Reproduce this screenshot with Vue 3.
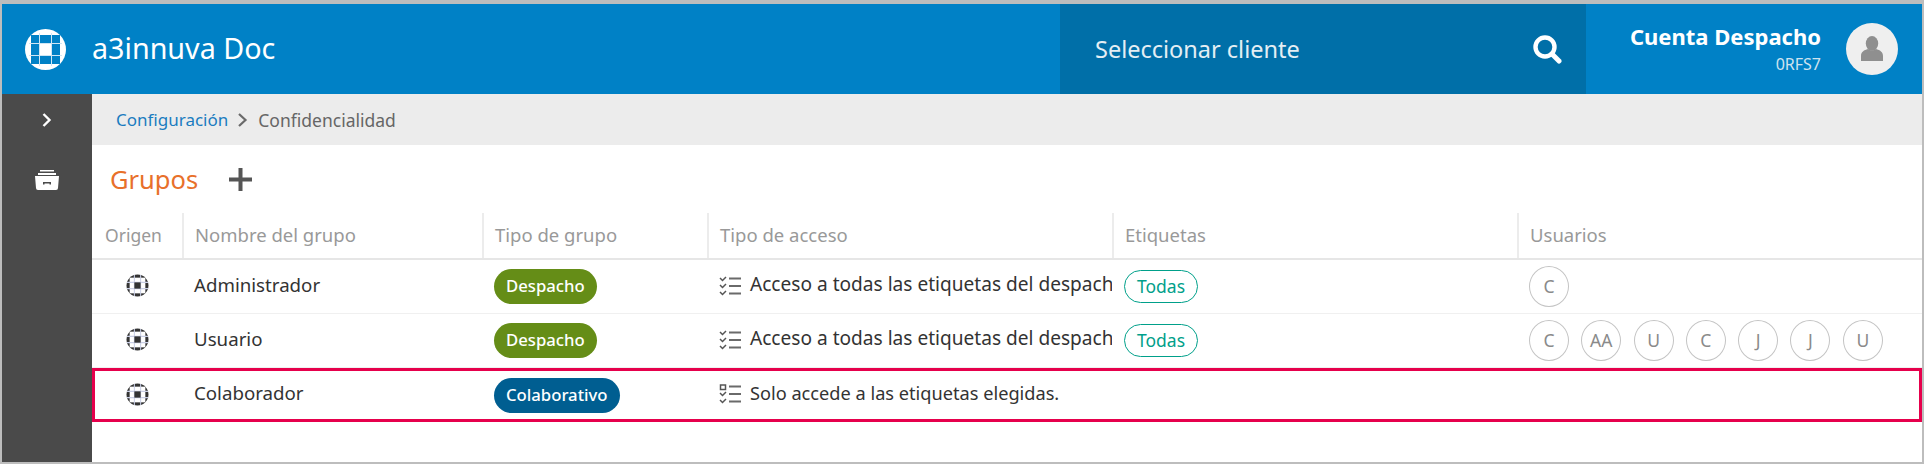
<script setup>
const columns = ["Origen", "Nombre del grupo", "Tipo de grupo", "Tipo de acceso", "Etiquetas", "Usuarios"];

const groups = [
  { name: "Administrador", type: "Despacho", kind: "green", access: "Acceso a todas las etiquetas del despacho", tag: "Todas", users: ["C"], partial: false },
  { name: "Usuario", type: "Despacho", kind: "green", access: "Acceso a todas las etiquetas del despacho", tag: "Todas", users: ["C", "AA", "U", "C", "J", "J", "U"], partial: false },
  { name: "Colaborador", type: "Colaborativo", kind: "blue", access: "Solo accede a las etiquetas elegidas.", tag: "", users: [], partial: true },
];
</script>

<template>
  <div class="frame">
    <header class="topbar">
      <div class="brand">
        <svg class="logo" viewBox="0 0 41 41">
          <circle cx="20.5" cy="20.5" r="20.5" fill="#fff" />
          <path d="M14.500 4v33M26.500 4v33M4 14.500h33M4 26.500h33" stroke="#cfe6f4" stroke-width="1" />
          <g fill="#0081c6">
            <rect x="6" y="6" width="8" height="8" />
            <rect x="15" y="6" width="11" height="8" />
            <rect x="27" y="6" width="8" height="8" />
            <rect x="6" y="15" width="8" height="11" />
            <rect x="27" y="15" width="8" height="11" />
            <rect x="6" y="27" width="8" height="8" />
            <rect x="15" y="27" width="11" height="8" />
            <rect x="27" y="27" width="8" height="8" />
          </g>
        </svg>
        <span class="title">a3innuva Doc</span>
      </div>
      <div class="search">
        <span>Seleccionar cliente</span>
        <svg class="search-icon" viewBox="0 0 30 30">
          <circle cx="13" cy="13" r="9.5" fill="none" stroke="#fff" stroke-width="4.4" />
          <path d="M20 20l7 7" stroke="#fff" stroke-width="5" stroke-linecap="round" />
        </svg>
      </div>
      <div class="account">
        <div class="account-text">
          <strong>Cuenta Despacho</strong>
          <small>0RFS7</small>
        </div>
        <div class="account-avatar">
          <svg viewBox="0 0 52 52">
            <ellipse cx="26" cy="20.5" rx="6.2" ry="7.5" fill="#8f8f8f" />
            <path d="M15 38v-5c0-4 3-6 7-7l4 2 4-2c4 1 7 3 7 7v5z" fill="#8f8f8f" />
          </svg>
        </div>
      </div>
    </header>

    <div class="body">
      <aside class="sidebar">
        <svg class="chevron" viewBox="0 0 12 16">
          <path d="M2.5 2l6 6-6 6" fill="none" stroke="#fff" stroke-width="2.4" />
        </svg>
        <svg class="archive" viewBox="0 0 26 20">
          <path d="M6 0h14v1.500H6zM4 3h18v2H4z" fill="#fff" />
          <path d="M1 6h24l-1 12a2 2 0 0 1-2 2H4a2 2 0 0 1-2-2z" fill="#fff" />
          <path d="M9 12h8v2.500h-1.500V13.500h-5v1H9z" fill="#4a4a4a" />
        </svg>
      </aside>

      <main class="content">
        <nav class="breadcrumb">
          <a>Configuración</a>
          <svg viewBox="0 0 12 16"><path d="M2 2l6.500 6-6.500 6" fill="none" stroke="#6a6a6a" stroke-width="2.200" /></svg>
          <span>Confidencialidad</span>
        </nav>

        <div class="heading">
          <h1>Grupos</h1>
          <svg class="plus" viewBox="0 0 23 23">
            <path d="M11.500 0v23M0 11.500h23" stroke="#555" stroke-width="4" />
          </svg>
        </div>

        <div class="row head">
          <div v-for="col in columns" :key="col" class="th">{{ col }}</div>
        </div>

        <div v-for="group in groups" :key="group.name" class="row" :class="{ selected: group.partial }">
          <div class="cell origin">
            <svg viewBox="0 0 22 22">
              <defs>
                <clipPath id="disc"><circle cx="11" cy="11" r="10.500" /></clipPath>
              </defs>
              <g clip-path="url(#disc)">
                <rect width="22" height="22" fill="#333" />
                <rect x="3.500" y="3.500" width="15" height="15" fill="#fff" />
                <path d="M8 0v22M14 0v22M0 8h22M0 14h22" stroke="#c9cfe6" stroke-width="1" />
                <rect x="8" y="8" width="6" height="6" fill="#333" />
              </g>
            </svg>
          </div>
          <div class="cell name">{{ group.name }}</div>
          <div class="cell">
            <span class="pill" :class="group.kind">{{ group.type }}</span>
          </div>
          <div class="cell access">
            <svg class="list-icon" viewBox="0 0 22 20">
              <rect v-if="group.partial" x="1.500" y="1" width="5" height="4.500" fill="none" stroke="#555" stroke-width="1.500" />
              <path v-else d="M1 2l2.500 2.500L7 1" fill="none" stroke="#555" stroke-width="1.500" />
              <path d="M1 9l2.500 2.500L7 8M1 16l2.500 2.500L7 15" fill="none" stroke="#555" stroke-width="1.500" />
              <path d="M10 2.500h12M10 10h12M10 17.500h12" stroke="#6a6a6a" stroke-width="2" />
            </svg>
            <span class="access-text">{{ group.access }}</span>
          </div>
          <div class="cell tag-cell">
            <span v-if="group.tag" class="tag">{{ group.tag }}</span>
          </div>
          <div class="cell users">
            <span v-for="(user, i) in group.users" :key="i" class="user">{{ user }}</span>
          </div>
        </div>
      </main>
    </div>
  </div>
</template>

<style scoped>
.frame {
  box-sizing: border-box;
  width: 1924px;
  height: 464px;
  border: 2px solid #bdbdbd;
  border-top-width: 4px;
  background: #fff;
  display: flex;
  flex-direction: column;
  overflow: hidden;
  font-family: "Noto Sans", sans-serif;
  color: #333;
}
.topbar {
  height: 90px;
  flex: none;
  background: #0081c6;
  display: flex;
  color: #fff;
}
.brand {
  width: 1058px;
  display: flex;
  align-items: center;
  padding-left: 23px;
  box-sizing: border-box;
}
.logo {
  width: 41px;
  height: 41px;
}
.title {
  margin-left: 26px;
  font-size: 28.7px;
  line-height: 36px;
  padding-bottom: 2px;
}
.search {
  width: 526px;
  background: #006fa8;
  display: flex;
  align-items: center;
  justify-content: space-between;
  box-sizing: border-box;
  padding: 0 24px 0 35px;
  font-size: 23.5px;
  color: #e4eef4;
}
.search-icon {
  width: 30px;
  height: 30px;
}
.account {
  flex: 1;
  display: flex;
  align-items: center;
  justify-content: flex-end;
  padding-right: 24px;
}
.account-text {
  display: flex;
  flex-direction: column;
  align-items: flex-end;
  margin-right: 25px;
}
.account-text strong {
  font-size: 22px;
  line-height: 28px;
  font-weight: 700;
}
.account-text small {
  font-size: 16px;
  line-height: 24px;
  margin-top: 2px;
  color: #cfe3ef;
}
.account-avatar {
  width: 52px;
  height: 52px;
  border-radius: 50%;
  background: #efefef;
}
.account-avatar svg {
  width: 52px;
  height: 52px;
  display: block;
}
.body {
  flex: 1;
  display: flex;
  min-height: 0;
}
.sidebar {
  width: 90px;
  flex: none;
  background: #4a4a4a;
  display: flex;
  flex-direction: column;
  align-items: center;
  padding-top: 18px;
  box-sizing: border-box;
}
.chevron {
  width: 12px;
  height: 16px;
}
.archive {
  width: 26px;
  height: 20px;
  margin-top: 42px;
}
.content {
  flex: 1;
  min-width: 0;
}
.breadcrumb {
  height: 51px;
  background: #ececec;
  display: flex;
  align-items: center;
  padding-left: 24px;
  font-size: 17px;
  color: #666;
}
.breadcrumb a {
  color: #1a7cc0;
}
.breadcrumb span {
  font-size: 17.5px;
}
.breadcrumb svg {
  width: 12px;
  height: 16px;
  margin: 0 9px 0 9px;
}
.heading {
  height: 68px;
  display: flex;
  align-items: center;
  padding-left: 18px;
}
.heading h1 {
  margin: 0;
  font-size: 25.5px;
  font-weight: 400;
  color: #e8702a;
}
.plus {
  width: 23px;
  height: 23px;
  margin-left: 31px;
}
.row {
  display: grid;
  grid-template-columns: 90px 300px 225px 405px 405px 1fr;
  height: 54px;
  box-sizing: border-box;
  border-bottom: 1px solid #f0f0f0;
}
.row.head {
  height: 47px;
  border-bottom: 2px solid #e6e6e6;
}
.th {
  height: 45px;
  display: flex;
  align-items: center;
  padding: 0 0 2px 11px;
  font-size: 18.5px;
  color: #999;
  border-left: 2px solid #ececec;
  box-sizing: border-box;
}
.th:first-child {
  border-left: none;
  padding-left: 13px;
  font-size: 17.500px;
}
.row.selected {
  border-bottom: none;
  box-shadow: inset 0 0 0 3px #e6004c;
}
.cell {
  display: flex;
  align-items: center;
  min-width: 0;
  font-size: 18.7px;
  color: #333;
  padding-left: 12px;
}
.origin {
  justify-content: center;
  padding-left: 0;
  padding-right: 0;
  padding-bottom: 2px;
}
.origin svg {
  width: 23px;
  height: 23px;
}
.name {
  padding-bottom: 5px;
}
.pill {
  height: 35px;
  padding: 0 12px 2px;
  box-sizing: border-box;
  border-radius: 18px;
  display: inline-flex;
  align-items: center;
  color: #fff;
  font-size: 16.7px;
  font-weight: 500;
}
.pill.green {
  background: #658d17;
}
.pill.blue {
  background: #005e91;
}
.access {
  overflow: hidden;
  padding-bottom: 2px;
}
.list-icon {
  width: 22px;
  height: 20px;
  flex: none;
  margin-right: 9px;
}
.access-text {
  white-space: nowrap;
  font-size: 19.1px;
  padding-bottom: 3px;
}
.selected .access-text {
  font-size: 18.2px;
}
.tag {
  height: 33px;
  box-sizing: border-box;
  padding: 0 12px 1px;
  border: 1px solid #00a08a;
  border-radius: 17px;
  display: inline-flex;
  align-items: center;
  color: #00a08a;
  font-size: 17.500px;
}
.users {
  gap: 12.3px;
  padding-bottom: 1px;
}
.user {
  width: 40px;
  height: 41px;
  flex: none;
  box-sizing: border-box;
  border: 1px solid #c4c4c4;
  border-radius: 50%;
  display: inline-flex;
  align-items: center;
  justify-content: center;
  color: #8a8a8a;
  font-size: 17.500px;
}
</style>
